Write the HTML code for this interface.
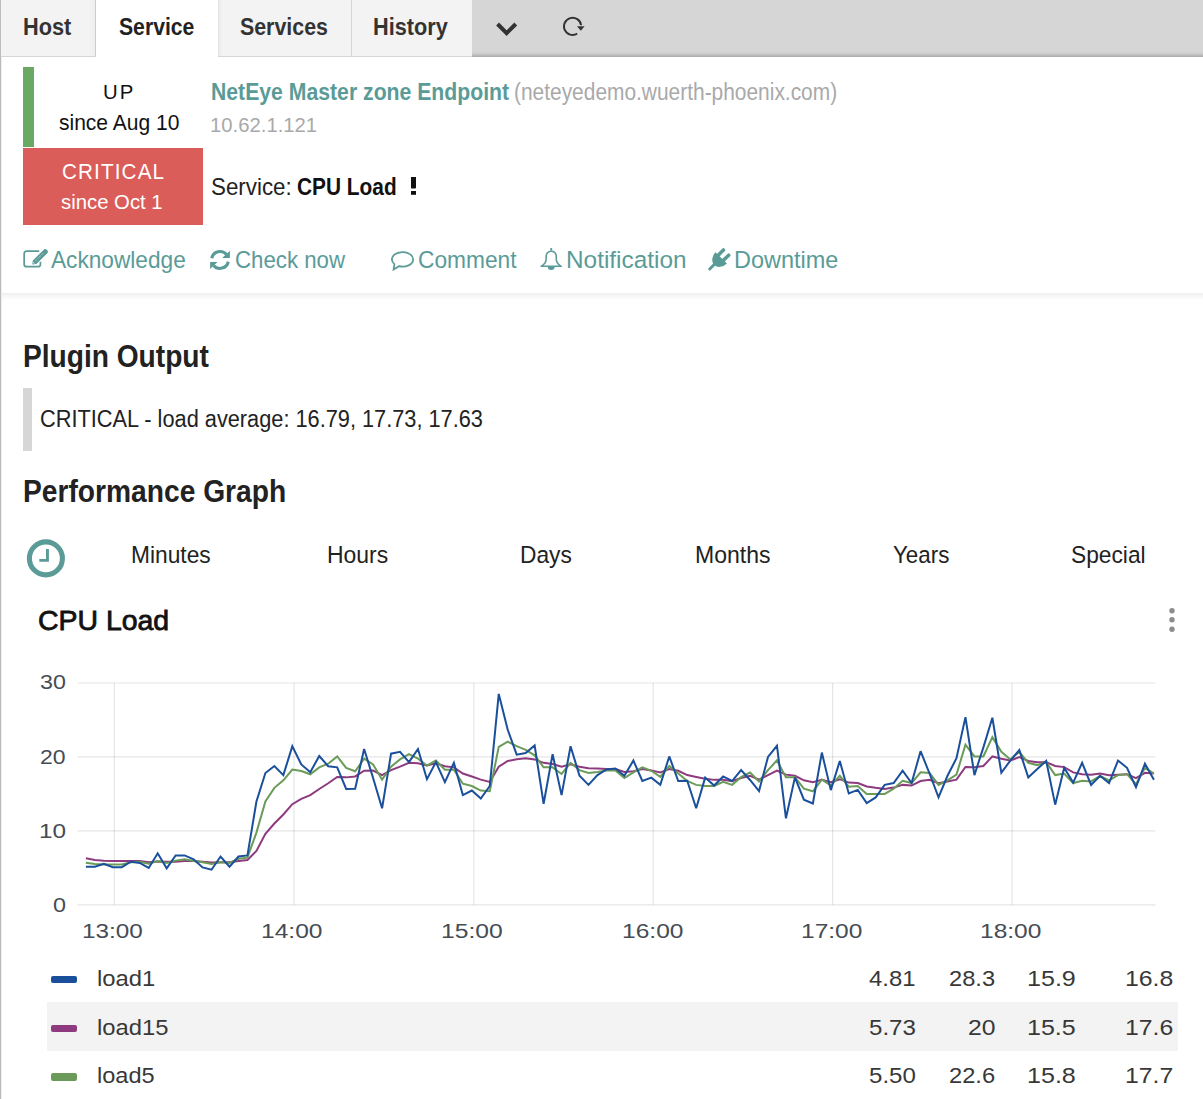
<!DOCTYPE html>
<html><head><meta charset="utf-8"><title>CPU Load</title>
<style>
html,body{margin:0;padding:0;}
body{width:1203px;height:1099px;overflow:hidden;position:relative;background:#fff;font-family:"Liberation Sans",sans-serif;}
.abs{position:absolute;display:block;}
.t{position:absolute;white-space:nowrap;line-height:1;transform-origin:0 0;}
</style></head><body>
<div class="abs" style="left:0;top:0;width:1px;height:1099px;background:#bcbcbc"></div>
<div class="abs" style="left:1px;top:0;width:1px;height:1099px;background:#ececec"></div>
<div class="abs" style="left:472px;top:0;width:731px;height:57px;background:linear-gradient(to bottom,#d6d6d6 0,#d6d6d6 51px,#cdcdcd 53.5px,#b9b9b9 55.5px,#a9a9a9 57px)"></div>
<div class="abs" style="left:1px;top:0;width:94px;height:56px;background:linear-gradient(to right,#f3f3f3 0,#f3f3f3 88px,#eeeeee 94px);border-right:1px solid #cdcdcd;border-bottom:1px solid #d6d6d6"></div>
<div class="abs" style="left:96px;top:0;width:122px;height:57px;background:#fff"></div>
<div class="abs" style="left:218px;top:0;width:133px;height:56px;background:linear-gradient(to right,#e2e2e2 0,#eeeeee 2px,#f3f3f3 5px);border-right:1px solid #d6d6d6;border-bottom:1px solid #d6d6d6"></div>
<div class="abs" style="left:352px;top:0;width:120px;height:56px;background:#f3f3f3;border-bottom:1px solid #d6d6d6"></div>
<div class="abs" style="left:2px;top:293px;width:1201px;height:7px;background:linear-gradient(#efefef,#fff)"></div>
<div class="abs" style="left:23px;top:67px;width:11px;height:80px;background:#6aa964"></div>
<div class="abs" style="left:23px;top:148px;width:180px;height:77px;background:#da5d59"></div>
<div class="abs" style="left:23px;top:388px;width:9px;height:63px;background:#d6d6d6"></div>
<div class="abs" style="left:47px;top:1002px;width:1131px;height:49px;background:#f3f3f3"></div>
<div class="abs" style="left:51px;top:976px;width:26px;height:7px;border-radius:2px;background:#1a4f9c"></div>
<div class="abs" style="left:51px;top:1025px;width:26px;height:7px;border-radius:2px;background:#8e3a7e"></div>
<div class="abs" style="left:51px;top:1073px;width:26px;height:8px;border-radius:2px;background:#6a9b58"></div>
<svg class="abs" style="left:0;top:0" width="1203" height="1099" viewBox="0 0 1203 1099">
<g stroke="#000" stroke-opacity="0.1" stroke-width="1.2"><line x1="77.5" y1="683.0" x2="1155.4" y2="683.0" /><line x1="77.5" y1="756.93" x2="1155.4" y2="756.93" /><line x1="77.5" y1="830.87" x2="1155.4" y2="830.87" /><line x1="77.5" y1="904.8" x2="1155.4" y2="904.8" /><line x1="114.3" y1="683" x2="114.3" y2="904.8" /><line x1="294.0" y1="683" x2="294.0" y2="904.8" /><line x1="473.8" y1="683" x2="473.8" y2="904.8" /><line x1="653.2" y1="683" x2="653.2" y2="904.8" /><line x1="832.6" y1="683" x2="832.6" y2="904.8" /><line x1="1012.1" y1="683" x2="1012.1" y2="904.8" /></g>
<g fill="none" stroke-width="2" stroke-linejoin="miter" stroke-miterlimit="3">
<polyline stroke="#8e3a7e" points="85.9,858.35 94.88,859.95 103.85,860.63 112.83,861.08 121.8,861.08 130.78,861.08 139.75,861.08 148.72,862.22 157.7,861.54 166.68,861.77 175.65,861.77 184.62,861.08 193.6,861.08 202.57,861.77 211.55,862.45 220.53,862.22 229.5,862.22 238.47,861.08 247.45,859.95 256.43,850.85 265.4,833.79 274.38,823.55 283.35,814.45 292.32,804.21 301.3,798.87 310.27,795.11 319.25,788.97 328.23,783.28 337.2,776.92 346.17,777.37 355.15,776.46 364.12,770.77 373.1,770.55 382.08,775.1 391.05,770.09 400.02,766.68 409.0,762.81 417.98,763.27 426.95,765.54 435.92,763.27 444.9,766.22 453.88,767.36 462.85,773.5 471.83,776.46 480.8,779.65 489.77,781.92 498.75,766.68 507.73,760.99 516.7,759.17 525.67,758.26 534.65,759.4 543.62,762.81 552.6,763.95 561.57,766.68 570.55,764.4 579.52,766.68 588.5,768.27 597.48,768.5 606.45,768.95 615.42,768.95 624.4,771.91 633.38,771.23 642.35,768.95 651.32,770.55 660.3,772.37 669.27,768.95 678.25,770.77 687.22,775.1 696.2,776.92 705.17,778.74 714.15,779.87 723.12,779.87 732.1,781.24 741.07,778.05 750.05,775.78 759.02,779.65 768.0,775.1 776.97,770.55 785.95,774.64 794.92,775.78 803.9,780.33 812.88,782.15 821.85,779.87 830.82,782.15 839.8,779.19 848.77,782.6 857.75,783.06 866.72,786.47 875.7,787.83 884.67,788.97 893.65,787.61 902.62,784.88 911.6,785.56 920.57,781.01 929.55,779.87 938.52,783.28 947.5,781.46 956.47,779.65 965.45,767.02 974.42,767.36 983.4,766.0 992.37,756.44 1001.35,758.72 1010.32,760.54 1019.3,757.12 1028.28,760.99 1037.25,762.13 1046.22,762.13 1055.2,766.0 1064.17,767.13 1073.15,772.37 1082.12,774.19 1091.1,774.64 1100.08,773.5 1109.05,775.32 1118.03,774.64 1127.0,774.19 1135.98,778.05 1144.95,772.82 1153.92,773.5"/>
<polyline stroke="#6a9b58" points="85.9,862.68 94.88,864.04 103.85,864.49 112.83,864.49 121.8,864.49 130.78,862.22 139.75,861.77 148.72,863.81 157.7,861.08 166.68,862.9 175.65,860.63 184.62,859.26 193.6,861.08 202.57,862.22 211.55,864.04 220.53,862.22 229.5,862.9 238.47,858.81 247.45,857.67 256.43,832.65 265.4,801.48 274.38,787.83 283.35,780.33 292.32,769.52 301.3,771.0 310.27,774.3 319.25,767.36 328.23,763.72 337.2,756.44 346.17,767.82 355.15,771.23 364.12,758.72 373.1,764.4 382.08,779.65 391.05,766.68 400.02,759.4 409.0,754.17 417.98,758.72 426.95,765.54 435.92,760.54 444.9,769.64 453.88,769.64 462.85,783.74 471.83,786.01 480.8,790.56 489.77,791.25 498.75,746.89 507.73,741.66 516.7,746.21 525.67,749.85 534.65,755.3 543.62,767.36 552.6,767.36 561.57,773.96 570.55,762.81 579.52,770.09 588.5,773.05 597.48,771.91 606.45,770.55 615.42,770.55 624.4,778.05 633.38,772.37 642.35,767.36 651.32,770.77 660.3,776.92 669.27,766.0 678.25,773.5 687.22,781.01 696.2,784.88 705.17,786.01 714.15,786.01 723.12,781.92 732.1,784.88 741.07,777.14 750.05,772.59 759.02,781.46 768.0,770.09 776.97,760.31 785.95,777.37 794.92,777.37 803.9,788.74 812.88,791.25 821.85,779.65 830.82,785.56 839.8,775.78 848.77,786.7 857.75,786.01 866.72,793.98 875.7,793.98 884.67,793.98 893.65,788.74 902.62,780.78 911.6,783.06 920.57,772.37 929.55,773.05 938.52,784.88 947.5,780.33 956.47,774.64 965.45,744.61 974.42,756.44 983.4,756.44 992.37,737.11 1001.35,751.89 1010.32,759.4 1019.3,751.89 1028.28,762.81 1037.25,765.09 1046.22,762.13 1055.2,775.1 1064.17,773.5 1073.15,783.06 1082.12,780.78 1091.1,781.46 1100.08,775.78 1109.05,780.33 1118.03,775.1 1127.0,774.19 1135.98,784.19 1144.95,767.82 1153.92,773.5"/>
<polyline stroke="#1a4f9c" points="85.9,866.77 94.88,866.77 103.85,863.81 112.83,867.22 121.8,867.22 130.78,861.77 139.75,862.9 148.72,867.91 157.7,853.35 166.68,868.36 175.65,855.4 184.62,855.4 193.6,859.26 202.57,867.45 211.55,869.73 220.53,856.53 229.5,866.77 238.47,856.53 247.45,855.4 256.43,801.48 265.4,773.05 274.38,766.0 283.35,775.1 292.32,746.21 301.3,764.4 310.27,772.14 319.25,755.99 328.23,766.22 337.2,767.36 346.17,788.97 355.15,788.74 364.12,748.94 373.1,778.05 382.08,808.31 391.05,753.71 400.02,751.89 409.0,762.13 417.98,748.94 426.95,779.19 435.92,762.13 444.9,782.15 453.88,762.81 462.85,795.11 471.83,790.56 480.8,798.53 489.77,786.01 498.75,693.89 507.73,729.83 516.7,754.62 525.67,753.03 534.65,745.52 543.62,803.76 552.6,754.17 561.57,795.11 570.55,746.21 579.52,775.78 588.5,784.88 597.48,775.1 606.45,769.41 615.42,768.5 624.4,775.78 633.38,760.54 642.35,781.01 651.32,777.6 660.3,784.88 669.27,756.44 678.25,781.01 687.22,780.78 696.2,808.31 705.17,777.6 714.15,785.56 723.12,776.46 732.1,781.01 741.07,770.09 750.05,779.99 759.02,791.02 768.0,756.9 776.97,745.75 785.95,818.32 794.92,777.37 803.9,799.66 812.88,803.53 821.85,752.58 830.82,790.11 839.8,760.99 848.77,793.52 857.75,789.88 866.72,803.08 875.7,797.39 884.67,784.88 893.65,783.06 902.62,770.77 911.6,783.06 920.57,751.21 929.55,773.5 938.52,797.39 947.5,775.78 956.47,758.26 965.45,717.09 974.42,775.1 983.4,747.34 992.37,717.77 1001.35,772.82 1010.32,760.54 1019.3,750.07 1028.28,777.37 1037.25,768.95 1046.22,760.99 1055.2,804.67 1064.17,767.82 1073.15,782.6 1082.12,762.81 1091.1,784.88 1100.08,775.78 1109.05,783.06 1118.03,760.54 1127.0,767.82 1135.98,787.15 1144.95,763.72 1153.92,779.65"/>
</g>
</svg>

<svg class="abs" style="left:490px;top:16px" width="100" height="26" viewBox="0 0 100 26">
 <path d="M7.55 8 L16.65 17.1 L25.75 8" fill="none" stroke="#333" stroke-width="4" stroke-linecap="butt"/>
 <path d="M91.12 9.2 A8.6 8.6 0 1 0 87.16 17.69" fill="none" stroke="#333" stroke-width="2"/>
 <path d="M87 10.2 L94.6 10.2 L90.8 14.8 Z" fill="#333"/>
</svg>
<svg class="abs" style="left:22px;top:248px" width="27" height="22" viewBox="0 0 27 22">
 <path d="M18.45 13.8 V16.15 a2.5 2.5 0 0 1 -2.5 2.5 H4.65 a2.5 2.5 0 0 1 -2.5 -2.5 V5.65 a2.5 2.5 0 0 1 2.5 -2.5 H17.2" fill="none" stroke="#5a9b98" stroke-width="1.7"/>
 <path d="M10.3 16.5 L10.79 12.47 L21.53 1.93 A2.5 2.5 0 0 1 25.07 5.47 L14.33 16.01 Z" fill="#5a9b98"/>
 <path d="M11.2 15.6 L11.5 13.9 L12.9 15.3 Z" fill="#fff"/>
 <path d="M13.6 12.8 L21.4 5.0" stroke="#fff" stroke-width="0.7" stroke-dasharray="1 0.9"/>
</svg>
<svg class="abs" style="left:208px;top:248px" width="25" height="23" viewBox="0 0 25 23">
 <path d="M3.73 10.3 A8.5 8.5 0 0 1 18.51 6.49" fill="none" stroke="#5a9b98" stroke-width="3.1"/>
 <path d="M14.18 10 L21.9 10 L21.9 2.86 Z" fill="#5a9b98"/>
 <path d="M20.27 13.6 A8.5 8.5 0 0 1 5.49 17.41" fill="none" stroke="#5a9b98" stroke-width="3.1"/>
 <path d="M2.1 13.93 L9.52 13.93 L2.1 20.9 Z" fill="#5a9b98"/>
</svg>
<svg class="abs" style="left:390px;top:248px" width="26" height="24" viewBox="0 0 26 24">
 <path d="M4.43 16.06 L3.6 21.6 L8.92 18.21 A10.6 7.25 0 1 0 4.43 16.06 Z" fill="none" stroke="#5a9b98" stroke-width="1.75" stroke-linejoin="miter"/>
</svg>
<svg class="abs" style="left:539px;top:246px" width="25" height="26" viewBox="0 0 25 26">
 <path d="M12.2 5.2 C9 5.2 7.1 7.5 7.1 11 V13.5 C7.1 16.5 5 18.5 2.2 20.3 H22.2 C19.4 18.5 17.3 16.5 17.3 13.5 V11 C17.3 7.5 15.4 5.2 12.2 5.2 Z" fill="none" stroke="#5a9b98" stroke-width="1.6" stroke-linejoin="round"/>
 <path d="M12.2 2.1 V4.6" stroke="#5a9b98" stroke-width="1.9"/>
 <path d="M8.7 20.6 A3.5 3.5 0 0 0 15.7 20.6 Z" fill="#5a9b98"/>
</svg>
<svg class="abs" style="left:706px;top:246px" width="28" height="26" viewBox="0 0 28 26">
 <path d="M3.73 22.95 L8.5 18.2" stroke="#5a9b98" stroke-width="2.9" stroke-linecap="round"/>
 <path d="M20.95 17.45 A8.03 10.3 44.3 0 1 9.47 6.23 Z" fill="#5a9b98"/>
 <path d="M12.2 9.2 L17.43 4.01" stroke="#5a9b98" stroke-width="3.6" stroke-linecap="round"/>
 <path d="M17.2 14.5 L22.67 9.25" stroke="#5a9b98" stroke-width="3.6" stroke-linecap="round"/>
</svg>
<svg class="abs" style="left:24px;top:537px" width="44" height="44" viewBox="0 0 44 44">
 <circle cx="21.9" cy="21.4" r="16.5" fill="none" stroke="#5a9b98" stroke-width="5.1"/>
 <path d="M23.45 12 V23.35 H15.3" fill="none" stroke="#5a9b98" stroke-width="2.9"/>
</svg>
<svg class="abs" style="left:408px;top:175px" width="12" height="22" viewBox="0 0 12 22">
 <path d="M3 2 H8 V12.6 Q8 13.5 7.1 13.5 H3.9 Q3 13.5 3 12.6 Z" fill="#111"/>
 <rect x="3" y="16" width="5" height="3.8" fill="#111"/>
</svg>
<svg class="abs" style="left:1165px;top:605px" width="14" height="30" viewBox="0 0 14 30">
 <circle cx="7" cy="5.7" r="2.7" fill="#8c8c8c"/>
 <circle cx="7" cy="14.8" r="2.7" fill="#8c8c8c"/>
 <circle cx="7" cy="24.2" r="2.7" fill="#8c8c8c"/>
</svg>

<span class="t" style="left:22.93px;top:15.1px;font-size:24.13px;font-weight:700;color:#333;transform:scaleX(0.9013);">Host</span>
<span class="t" style="left:118.63px;top:15.1px;font-size:24.13px;font-weight:700;color:#222;transform:scaleX(0.8775);">Service</span>
<span class="t" style="left:240.42px;top:15.1px;font-size:24.13px;font-weight:700;color:#333;transform:scaleX(0.8853);">Services</span>
<span class="t" style="left:373.23px;top:15.1px;font-size:24.13px;font-weight:700;color:#333;transform:scaleX(0.8997);">History</span>
<span class="t" style="left:102.91px;top:81.7px;font-size:20.94px;font-weight:400;color:#111;transform:scaleX(0.9729);letter-spacing:2px;">UP</span>
<span class="t" style="left:59.24px;top:111.7px;font-size:21.83px;font-weight:400;color:#111;transform:scaleX(0.9628);">since Aug 10</span>
<span class="t" style="left:61.52px;top:160.9px;font-size:21.8px;font-weight:400;color:#fff;transform:scaleX(0.9474);letter-spacing:1.2px;">CRITICAL</span>
<span class="t" style="left:61.24px;top:192.0px;font-size:20.65px;font-weight:400;color:#fff;transform:scaleX(0.9846);">since Oct 1</span>
<span class="t" style="left:210.55px;top:80.0px;font-size:23.89px;font-weight:700;color:#5a9b98;transform:scaleX(0.8881);">NetEye Master zone Endpoint</span>
<span class="t" style="left:513.66px;top:80.0px;font-size:23.89px;font-weight:400;color:#a9a9a9;transform:scaleX(0.8759);">(neteyedemo.wuerth-phoenix.com)</span>
<span class="t" style="left:210.42px;top:114.9px;font-size:20.94px;font-weight:400;color:#a9a9a9;transform:scaleX(0.9686);">10.62.1.121</span>
<span class="t" style="left:211.08px;top:174.8px;font-size:24.13px;font-weight:400;color:#222;transform:scaleX(0.9267);">Service:</span>
<span class="t" style="left:297.12px;top:174.8px;font-size:24.13px;font-weight:700;color:#111;transform:scaleX(0.8646);">CPU Load</span>
<span class="t" style="left:51.43px;top:247.8px;font-size:24.13px;font-weight:400;color:#5a9b98;transform:scaleX(0.9392);">Acknowledge</span>
<span class="t" style="left:235.31px;top:247.8px;font-size:24.13px;font-weight:400;color:#5a9b98;transform:scaleX(0.9217);">Check now</span>
<span class="t" style="left:417.99px;top:247.8px;font-size:24.13px;font-weight:400;color:#5a9b98;transform:scaleX(0.9424);">Comment</span>
<span class="t" style="left:565.69px;top:247.8px;font-size:24.13px;font-weight:400;color:#5a9b98;transform:scaleX(1.0102);">Notification</span>
<span class="t" style="left:733.96px;top:247.8px;font-size:24.13px;font-weight:400;color:#5a9b98;transform:scaleX(0.9729);">Downtime</span>
<span class="t" style="left:22.87px;top:341.0px;font-size:31.11px;font-weight:700;color:#222;transform:scaleX(0.904);">Plugin Output</span>
<span class="t" style="left:40.14px;top:406.9px;font-size:24.42px;font-weight:400;color:#222;transform:scaleX(0.8912);">CRITICAL - load average: 16.79, 17.73, 17.63</span>
<span class="t" style="left:23.1px;top:474.9px;font-size:31.98px;font-weight:700;color:#222;transform:scaleX(0.8818);">Performance Graph</span>
<span class="t" style="left:130.74px;top:542.9px;font-size:24.71px;font-weight:400;color:#222;transform:scaleX(0.9212);">Minutes</span>
<span class="t" style="left:327.33px;top:542.9px;font-size:24.71px;font-weight:400;color:#222;transform:scaleX(0.9283);">Hours</span>
<span class="t" style="left:519.74px;top:542.9px;font-size:24.71px;font-weight:400;color:#222;transform:scaleX(0.9206);">Days</span>
<span class="t" style="left:695.22px;top:542.9px;font-size:24.71px;font-weight:400;color:#222;transform:scaleX(0.9313);">Months</span>
<span class="t" style="left:892.88px;top:542.9px;font-size:24.71px;font-weight:400;color:#222;transform:scaleX(0.9051);">Years</span>
<span class="t" style="left:1071.49px;top:542.9px;font-size:24.71px;font-weight:400;color:#222;transform:scaleX(0.9205);">Special</span>
<span class="t" style="left:38.49px;top:605.9px;font-size:28.31px;font-weight:400;color:#111;transform:scaleX(1.0047);-webkit-text-stroke:0.8px #111;">CPU Load</span>
<span class="t" style="left:40.05px;top:671.9px;font-size:20.93px;font-weight:400;color:#464c54;transform:scaleX(1.1099);">30</span>
<span class="t" style="left:40.1px;top:746.9px;font-size:20.93px;font-weight:400;color:#464c54;transform:scaleX(1.0991);">20</span>
<span class="t" style="left:38.61px;top:820.5px;font-size:20.93px;font-weight:400;color:#464c54;transform:scaleX(1.164);">10</span>
<span class="t" style="left:53.01px;top:895.0px;font-size:20.93px;font-weight:400;color:#464c54;transform:scaleX(1.1184);">0</span>
<span class="t" style="left:81.91px;top:920.8px;font-size:20.94px;font-weight:400;color:#464c54;transform:scaleX(1.1589);">13:00</span>
<span class="t" style="left:261.49px;top:920.8px;font-size:20.94px;font-weight:400;color:#464c54;transform:scaleX(1.1728);">14:00</span>
<span class="t" style="left:441.48px;top:920.8px;font-size:20.94px;font-weight:400;color:#464c54;transform:scaleX(1.1788);">15:00</span>
<span class="t" style="left:621.69px;top:920.8px;font-size:20.94px;font-weight:400;color:#464c54;transform:scaleX(1.1728);">16:00</span>
<span class="t" style="left:801.09px;top:920.8px;font-size:20.94px;font-weight:400;color:#464c54;transform:scaleX(1.1708);">17:00</span>
<span class="t" style="left:980.09px;top:920.8px;font-size:20.94px;font-weight:400;color:#464c54;transform:scaleX(1.1708);">18:00</span>
<span class="t" style="left:96.5px;top:968.75px;font-size:21.48px;font-weight:400;color:#383838;transform:scaleX(1.1093);">load1</span>
<span class="t" style="left:96.5px;top:1017.65px;font-size:21.48px;font-weight:400;color:#383838;transform:scaleX(1.1092);">load15</span>
<span class="t" style="left:96.51px;top:1066.05px;font-size:21.48px;font-weight:400;color:#383838;transform:scaleX(1.0977);">load5</span>
<span class="t" style="left:869.41px;top:968.75px;font-size:21.48px;font-weight:400;color:#383838;transform:scaleX(1.1136);">4.81</span>
<span class="t" style="left:949.39px;top:968.75px;font-size:21.48px;font-weight:400;color:#383838;transform:scaleX(1.1036);">28.3</span>
<span class="t" style="left:1027.06px;top:968.75px;font-size:21.48px;font-weight:400;color:#383838;transform:scaleX(1.1684);">15.9</span>
<span class="t" style="left:1125.38px;top:968.75px;font-size:21.48px;font-weight:400;color:#383838;transform:scaleX(1.1549);">16.8</span>
<span class="t" style="left:868.97px;top:1017.65px;font-size:21.48px;font-weight:400;color:#383838;transform:scaleX(1.1235);">5.73</span>
<span class="t" style="left:967.95px;top:1017.65px;font-size:21.48px;font-weight:400;color:#383838;transform:scaleX(1.1524);">20</span>
<span class="t" style="left:1027.06px;top:1017.65px;font-size:21.48px;font-weight:400;color:#383838;transform:scaleX(1.1673);">15.5</span>
<span class="t" style="left:1125.38px;top:1017.65px;font-size:21.48px;font-weight:400;color:#383838;transform:scaleX(1.1549);">17.6</span>
<span class="t" style="left:868.97px;top:1066.05px;font-size:21.48px;font-weight:400;color:#383838;transform:scaleX(1.1222);">5.50</span>
<span class="t" style="left:949.39px;top:1066.05px;font-size:21.48px;font-weight:400;color:#383838;transform:scaleX(1.1036);">22.6</span>
<span class="t" style="left:1027.06px;top:1066.05px;font-size:21.48px;font-weight:400;color:#383838;transform:scaleX(1.1676);">15.8</span>
<span class="t" style="left:1125.38px;top:1066.05px;font-size:21.48px;font-weight:400;color:#383838;transform:scaleX(1.1557);">17.7</span>
</body></html>
